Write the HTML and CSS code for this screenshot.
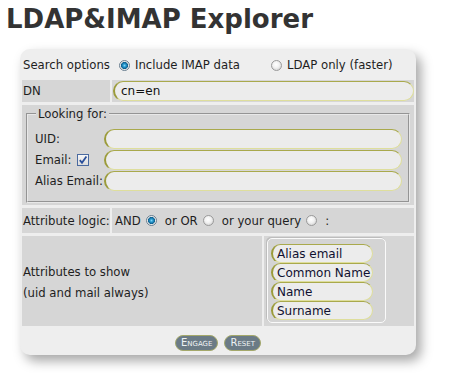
FILE: index.html
```html
<!DOCTYPE html>
<html>
<head>
<meta charset="utf-8">
<link rel="stylesheet" href="styles.css">
</head>
<body>
<h1 class="title">LDAP&amp;IMAP Explorer</h1>
<div class="panel">
  <div class="form">
    <div class="cell plain label">Search options</div>
    <div class="cell plain opt"><span class="radio on"></span>Include IMAP data</div>
    <div class="cell plain opt opt2"><span class="radio"></span>LDAP only (faster)</div>

    <div class="cell label">DN</div>
    <div class="cell span2 field"><div class="pill input">cn=en</div></div>

    <div class="cell span3 looking">
      <fieldset class="fs">
        <legend class="lg">Looking for:</legend>
        <div class="fgrid">
          <div class="flabel">UID:</div>
          <div class="pill input"></div>
          <div class="flabel">Email: <span class="check"><svg width="10" height="10" viewBox="0 0 10 10"><path d="M1.8 5.2 L4 7.8 L8.4 1.6" fill="none" stroke="#2a4f9a" stroke-width="1.8"/></svg></span></div>
          <div class="pill input"></div>
          <div class="flabel">Alias Email:</div>
          <div class="pill input"></div>
        </div>
      </fieldset>
    </div>

    <div class="cell label">Attribute logic:</div>
    <div class="cell span2 logic">AND<span class="radio on"></span>or OR<span class="radio"></span>or your query<span class="radio"></span>:</div>

    <div class="cell span2 attrs">Attributes to show<br>(uid and mail always)</div>
    <div class="cell listcell">
      <div class="list">
        <div class="pill item">Alias email</div>
        <div class="pill item">Common Name</div>
        <div class="pill item">Name</div>
        <div class="pill item">Surname</div>
      </div>
    </div>

    <div class="cell span3 plain buttons">
      <span class="btn">Engage</span>
      <span class="btn">Reset</span>
    </div>
  </div>
</div>
</body>
</html>
```
FILE: styles.css
```css
html, body {
  margin: 0;
  padding: 0;
  background: #ffffff;
}
body {
  font-family: "DejaVu Sans", Verdana, sans-serif;
  font-size: 11.7px;
  color: #1e1e1e;
  width: 456px;
  height: 373px;
  overflow: hidden;
}
.title {
  margin: 0;
  padding: 4px 0 0 6px;
  height: 45px;
  box-sizing: border-box;
  font-family: "DejaVu Sans", Verdana, sans-serif;
  font-weight: bold;
  font-size: 26px;
  line-height: 30px;
  color: #333333;
}
.panel {
  margin-left: 20px;
  margin-top: 4px;
  width: 396px;
  background: #eeeeee;
  border-radius: 10px;
  box-shadow: 5px 6px 12px rgba(0, 0, 0, 0.35);
  padding: 2px;
  box-sizing: border-box;
}
.form {
  display: grid;
  grid-template-columns: 88px 150px 1fr;
  gap: 3px 2px;
}
.cell {
  background: #d6d6d6;
  display: flex;
  align-items: center;
  box-sizing: border-box;
}
.plain {
  background: transparent;
}
.label {
  padding-left: 1px;
}
.span2 { grid-column: span 2; }
.span3 { grid-column: span 3; }
.opt {
  height: 26px;
  padding-left: 7px;
  padding-top: 2px;
}
.opt .radio { margin-right: 5px; }
.opt2 { padding-left: 7px; }
.form > .plain.label:first-child { padding-top: 2px; }
.field {
  height: 22px;
  padding: 0 0 0 1px;
}
.pill {
  box-sizing: border-box;
  border-radius: 10px;
  border: 1px solid #dede9c;
  border-left: 2px solid #9b9b3a;
  border-top: 1px solid #a9a94c;
  background: #ececec;
  color: #111;
}
.input {
  width: 100%;
  height: 20px;
  padding: 0 0 0 6px;
  line-height: 18px;
  font-size: 12px;
}
.looking {
  padding: 2px 4px 2px 4px;
  height: 100px;
  align-items: stretch;
}
.fs {
  margin: 0;
  padding: 4px 6px 8px 7px;
  border: 2px groove #e8e8e8;
  width: 100%;
  box-sizing: border-box;
}
.lg {
  padding: 0 2px;
  margin-left: 1px;
  font-size: 11.7px;
}
.fgrid {
  display: grid;
  grid-template-columns: auto 1fr;
  row-gap: 1px;
  align-items: center;
  margin-top: 4px;
}
.flabel {
  display: flex;
  align-items: center;
  padding-right: 1px;
}
.check {
  display: inline-block;
  width: 10px;
  height: 10px;
  margin-left: 6px;
  border: 1px solid #4a6aa0;
  background: linear-gradient(#f6f6f6, #dcdcdc);
}
.check svg { display: block; }
.logic {
  height: 25px;
  padding-left: 3px;
}
.radio {
  display: inline-block;
  flex: none;
  width: 11px;
  height: 11px;
  border-radius: 50%;
  border: 1px solid #9a9a9a;
  box-sizing: border-box;
  background: radial-gradient(circle at 45% 40%, #ffffff 0, #f2f2f2 3px, #d4d4d4 6px);
}
.radio.on {
  border-color: #6a7f90;
  background: radial-gradient(circle at 50% 50%, #7fd8f8 0, #2a9ad0 1.5px, #0c5d8c 3.3px, #e4e4e4 3.8px, #ffffff 5.5px);
}
.logic .radio { margin: 0 8px 0 5px; }
.attrs {
  height: 90px;
  line-height: 21px;
  padding-left: 1px;
  padding-top: 3px;
}
.listcell {
  align-items: stretch;
  padding: 2px 28px 3px 3px;
}
.list {
  flex: 1;
  border: 1px solid #fafafa;
  border-radius: 5px;
  padding: 5px 0 0 3px;
  background: #d4d4d4;
  box-shadow: -1px -1px 0 #bdbdbd;
}
.item {
  width: 102px;
  height: 19px;
  line-height: 18px;
  padding-left: 4px;
  font-size: 12px;
  background: #ececec;
  color: #101030;
}
.buttons {
  height: 24px;
  justify-content: center;
  gap: 6px;
  padding-top: 3px;
}
.btn {
  display: inline-block;
  height: 16px;
  line-height: 14px;
  padding: 0 5px;
  border-radius: 8px;
  background: #6b7b86;
  border: 1px solid #a4a86a;
  color: #eef2f4;
  font-size: 10px;
  font-variant: small-caps;
  text-transform: lowercase;
  box-sizing: border-box;
}
.btn::first-letter {
  text-transform: uppercase;
}
```
